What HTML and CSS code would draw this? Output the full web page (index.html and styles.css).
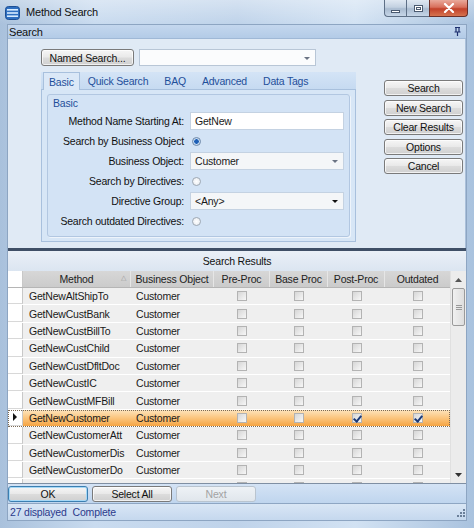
FILE: index.html
```html
<!DOCTYPE html>
<html>
<head>
<meta charset="utf-8">
<link rel="stylesheet" href="styles.css">
</head>
<body>
<div class="window">
  <div class="titlebar">
    <svg class="app-icon" width="15" height="14" viewBox="0 0 15 14">
      <rect x="0.5" y="0.5" width="14" height="13" rx="3" fill="#2f6fc0" stroke="#1d4f94"/>
      <rect x="2" y="3" width="11" height="1.6" fill="#d8ecff"/>
      <rect x="2" y="6.2" width="11" height="1.6" fill="#d8ecff"/>
      <rect x="2" y="9.4" width="11" height="1.6" fill="#d8ecff"/>
    </svg>
    <span class="title">Method Search</span>
    <div class="controls">
      <div class="ctl ctl-min"><span class="min-bar"></span></div>
      <div class="ctl ctl-max"><span class="max-box"></span></div>
      <div class="ctl ctl-close">
        <svg width="12" height="10" viewBox="0 0 12 10"><path d="M2 1 L10 9 M10 1 L2 9" stroke="#fff" stroke-width="2.2" stroke-linecap="round"/></svg>
      </div>
    </div>
  </div>

  <div class="client">
    <div class="search-head">
      <span>Search</span>
      <svg class="pin" width="7" height="9" viewBox="0 0 7 9"><path d="M1 0.5 H6 M2 0.5 V5 M5 0.5 V5 M0.5 5 H6.5 M3.5 5 V9" stroke="#1c2f6e" stroke-width="1.2" fill="none"/></svg>
    </div>

    <div class="panel">
      <div class="left">
        <div class="named-row">
          <button class="btn named-btn">Named Search...</button>
          <div class="combo named-combo"><span class="arrow"></span></div>
        </div>
        <div class="tabs">
          <div class="tab active">Basic</div>
          <div class="tab">Quick Search</div>
          <div class="tab">BAQ</div>
          <div class="tab">Advanced</div>
          <div class="tab">Data Tags</div>
        </div>
        <div class="tab-page">
          <div class="group">
            <div class="group-title">Basic</div>
            <div class="form">
              <div class="frow"><span class="lbl">Method Name Starting At:</span><div class="text">GetNew</div></div>
              <div class="frow"><span class="lbl">Search by Business Object</span><span class="radio on"></span></div>
              <div class="frow"><span class="lbl">Business Object:</span><div class="combo field">Customer<span class="arrow"></span></div></div>
              <div class="frow"><span class="lbl">Search by Directives:</span><span class="radio"></span></div>
              <div class="frow"><span class="lbl">Directive Group:</span><div class="combo field">&lt;Any&gt;<span class="arrow dark"></span></div></div>
              <div class="frow"><span class="lbl">Search outdated Directives:</span><span class="radio"></span></div>
            </div>
          </div>
        </div>
      </div>
      <div class="actions">
        <button class="btn act">Search</button>
        <button class="btn act">New Search</button>
        <button class="btn act">Clear Results</button>
        <button class="btn act">Options</button>
        <button class="btn act">Cancel</button>
      </div>
    </div>

    <div class="splitter"></div>
    <div class="results-head">Search Results</div>

    <div class="grid">
      <div class="grid-main">
        <div class="ghead">
          <div class="c sel"></div>
          <div class="c m">Method<span class="sort">&#9651;</span></div>
          <div class="c b">Business Object</div>
          <div class="c p">Pre-Proc</div>
          <div class="c q">Base Proc</div>
          <div class="c r">Post-Proc</div>
          <div class="c o">Outdated</div>
        </div>
        <div class="gbody">
          <div class="grow"><div class="c sel"></div><div class="c m">GetNewAltShipTo</div><div class="c b">Customer</div><div class="c p"><i class="cb"></i></div><div class="c q"><i class="cb"></i></div><div class="c r"><i class="cb"></i></div><div class="c o"><i class="cb"></i></div></div>
          <div class="grow"><div class="c sel"></div><div class="c m">GetNewCustBank</div><div class="c b">Customer</div><div class="c p"><i class="cb"></i></div><div class="c q"><i class="cb"></i></div><div class="c r"><i class="cb"></i></div><div class="c o"><i class="cb"></i></div></div>
          <div class="grow"><div class="c sel"></div><div class="c m">GetNewCustBillTo</div><div class="c b">Customer</div><div class="c p"><i class="cb"></i></div><div class="c q"><i class="cb"></i></div><div class="c r"><i class="cb"></i></div><div class="c o"><i class="cb"></i></div></div>
          <div class="grow"><div class="c sel"></div><div class="c m">GetNewCustChild</div><div class="c b">Customer</div><div class="c p"><i class="cb"></i></div><div class="c q"><i class="cb"></i></div><div class="c r"><i class="cb"></i></div><div class="c o"><i class="cb"></i></div></div>
          <div class="grow"><div class="c sel"></div><div class="c m">GetNewCustDfltDoc</div><div class="c b">Customer</div><div class="c p"><i class="cb"></i></div><div class="c q"><i class="cb"></i></div><div class="c r"><i class="cb"></i></div><div class="c o"><i class="cb"></i></div></div>
          <div class="grow"><div class="c sel"></div><div class="c m">GetNewCustIC</div><div class="c b">Customer</div><div class="c p"><i class="cb"></i></div><div class="c q"><i class="cb"></i></div><div class="c r"><i class="cb"></i></div><div class="c o"><i class="cb"></i></div></div>
          <div class="grow"><div class="c sel"></div><div class="c m">GetNewCustMFBill</div><div class="c b">Customer</div><div class="c p"><i class="cb"></i></div><div class="c q"><i class="cb"></i></div><div class="c r"><i class="cb"></i></div><div class="c o"><i class="cb"></i></div></div>
          <div class="grow selected"><div class="c sel"><span class="tri"></span></div><div class="c m">GetNewCustomer</div><div class="c b">Customer</div><div class="c p"><i class="cb"></i></div><div class="c q"><i class="cb"></i></div><div class="c r"><i class="cb on"></i></div><div class="c o"><i class="cb on"></i></div></div>
          <div class="grow"><div class="c sel"></div><div class="c m">GetNewCustomerAtt</div><div class="c b">Customer</div><div class="c p"><i class="cb"></i></div><div class="c q"><i class="cb"></i></div><div class="c r"><i class="cb"></i></div><div class="c o"><i class="cb"></i></div></div>
          <div class="grow"><div class="c sel"></div><div class="c m">GetNewCustomerDis</div><div class="c b">Customer</div><div class="c p"><i class="cb"></i></div><div class="c q"><i class="cb"></i></div><div class="c r"><i class="cb"></i></div><div class="c o"><i class="cb"></i></div></div>
          <div class="grow"><div class="c sel"></div><div class="c m">GetNewCustomerDo</div><div class="c b">Customer</div><div class="c p"><i class="cb"></i></div><div class="c q"><i class="cb"></i></div><div class="c r"><i class="cb"></i></div><div class="c o"><i class="cb"></i></div></div>
          <div class="grow"><div class="c sel"></div><div class="c m"></div><div class="c b"></div><div class="c p"><i class="cb"></i></div><div class="c q"><i class="cb"></i></div><div class="c r"><i class="cb"></i></div><div class="c o"><i class="cb"></i></div></div>
        </div>
      </div>
      <div class="vscroll">
        <div class="sarrow"><svg width="7" height="4" viewBox="0 0 7 4"><path d="M0 4 L3.5 0 L7 4Z" fill="#555"/></svg></div>
        <div class="track">
          <div class="thumb"><span class="grip"></span></div>
        </div>
        <div class="sarrow"><svg width="7" height="4" viewBox="0 0 7 4"><path d="M0 0 L3.5 4 L7 0Z" fill="#333"/></svg></div>
      </div>
    </div>

    <div class="bottom-bar">
      <button class="btn bb focus">OK</button>
      <button class="btn bb">Select All</button>
      <button class="btn bb disabled">Next</button>
    </div>
    <div class="status">
      <span>27 displayed</span><span>Complete</span>
      <svg class="sgrip" width="10" height="10" viewBox="0 0 10 10">
        <g fill="#6a7f99"><rect x="8" y="0" width="2" height="2"/><rect x="5" y="3" width="2" height="2"/><rect x="8" y="3" width="2" height="2"/><rect x="2" y="6" width="2" height="2"/><rect x="5" y="6" width="2" height="2"/><rect x="8" y="6" width="2" height="2"/></g>
      </svg>
    </div>
  </div>
</div>
</body>
</html>
```
FILE: styles.css
```css
* { box-sizing: border-box; }
html, body { margin: 0; padding: 0; }
body {
  width: 474px; height: 528px; overflow: hidden;
  font-family: "Liberation Sans", Arial, sans-serif;
  font-size: 10.5px; letter-spacing: -0.2px; color: #1a1a1a;
  background: #9db4cf;
}
.window {
  width: 474px; height: 528px;
  display: flex; flex-direction: column;
  background: linear-gradient(90deg, #a9c1dc 0%, #c9dbef 20%, #bfd3ea 50%, #d2e2f3 75%, #a9c2de 100%);
}
.titlebar {
  height: 24px; flex: none;
  display: flex; align-items: center;
  padding-left: 5px;
  background: linear-gradient(180deg, rgba(255,255,255,0.35), rgba(255,255,255,0));
}
.app-icon { flex: none; margin-top: 1px; }
.title { margin-left: 6px; font-size: 11px; letter-spacing: -0.2px; color: #111; }
.controls { margin-left: auto; margin-right: 6px; align-self: flex-start; display: flex; height: 17px; }
.ctl {
  height: 17px; display: flex; align-items: center; justify-content: center;
  border: 1px solid #5d6f86; border-top: none;
  background: linear-gradient(180deg, #dfe8f2 0%, #c3d1e1 45%, #a9bbd0 55%, #c6d6e8 100%);
}
.ctl-min { width: 22px; border-radius: 0 0 0 4px; border-right: none; }
.ctl-max { width: 23px; border-right: none; }
.ctl-close {
  width: 39px; border-radius: 0 0 4px 0; border-color: #6b2f28;
  background: linear-gradient(180deg, #e9a99b 0%, #d8705c 45%, #c2412a 55%, #d6734f 100%);
}
.min-bar { width: 9px; height: 3px; background: #fff; border: 1px solid #4a5a70; margin-top: 6px; }
.max-box { width: 9px; height: 7px; border: 1px solid #4a5a70; background: #fff; box-shadow: inset 0 0 0 1px #fff, inset 0 0 0 2px #4a5a70; }

.client {
  flex: 1; margin: 0 7px 7px 7px;
  display: flex; flex-direction: column;
  background: #dfe9f5;
  border: 1px solid #8da5c2;
}
.search-head {
  height: 14px; flex: none;
  display: flex; align-items: center; justify-content: space-between;
  padding: 0 6px 0 1px;
  background: linear-gradient(180deg, #c4d7ee, #b3cbe7);
  border-bottom: 1px solid #9fb8d6;
  font-size: 11px; color: #111;
}
.pin { margin-right: -1px; }

.panel {
  height: 209px; flex: none;
  display: flex;
  padding: 10px 0 0 33px;
  background: #e0eaf5;
  border-right: 1px solid #aac0da;
}
.left { width: 315px; display: flex; flex-direction: column; }
.named-row { display: flex; height: 17px; align-items: stretch; }
.btn {
  font-family: "Liberation Sans", Arial, sans-serif; font-size: 10.5px; letter-spacing: -0.2px; color: #111;
  border: 1px solid #7a7a7a; border-radius: 3px;
  background: linear-gradient(180deg, #f6f6f6 0%, #e9e9e9 48%, #dcdcdc 52%, #d0d0d0 100%);
  padding: 0; margin: 0; line-height: 12px;
  box-shadow: inset 0 0 0 1px rgba(255,255,255,0.7);
  white-space: nowrap; overflow: visible;
}
.named-btn { width: 93px; }
.combo {
  position: relative;
  background: #fff; border: 1px solid #b8c6d6;
  display: flex; align-items: center; padding-left: 4px;
}
.named-combo { width: 177px; margin-left: 5px; background: #fbfcfd; }
.arrow {
  position: absolute; right: 5px; top: 50%; margin-top: -1px;
  width: 0; height: 0;
  border-left: 3px solid transparent; border-right: 3px solid transparent;
  border-top: 3px solid #6a7383;
}
.arrow.dark { border-top-color: #111; }

.tabs {
  margin-top: 6px; height: 18px; flex: none;
  display: flex; align-items: stretch;
  background: linear-gradient(180deg, #d4e4f6, #c6daf1);
  border-bottom: 1px solid #a8c0dd;
}
.tab {
  display: flex; align-items: center;
  padding: 0 8px; color: #1f4f9a;
}
.tab.active {
  margin-left: 2px; padding: 0 5px;
  background: #dbe8f7;
  border: 1px solid #a8c0dd; border-bottom: none;
  margin-bottom: -1px;
}
.tab-page {
  height: 152px;
  background: #d7e6f6;
  border: 1px solid #a8c0dd; border-top: none;
  padding: 4px 5px 4px 5px;
}
.group {
  height: 100%;
  border: 1px solid #b2c7e1; border-radius: 3px;
  background: #d3e3f5;
  padding: 2px 5px 0 5px;
  box-shadow: 1px 1px 0 #eef4fb;
}
.group-title { color: #1f4f9a; height: 13px; line-height: 13px; }
.form { margin-top: 2px; display: flex; flex-direction: column; gap: 2px; }
.frow { display: flex; align-items: center; height: 18px; }
.lbl { width: 131px; text-align: right; white-space: nowrap; flex: none; color: #111; }
.text, .field {
  margin-left: 6px; width: 156px; height: 18px;
  background: #fff; border: 1px solid #c4d2e2;
  display: flex; align-items: center; padding-left: 4px;
}
.field { background: #f4f6f8; }
.radio {
  margin-left: 8px; width: 9px; height: 9px; border-radius: 50%;
  border: 1px solid #9ea8b3;
  background: radial-gradient(circle, #fff 0%, #e4e8ed 100%);
  flex: none;
}
.radio.on {
  background: radial-gradient(circle, #1e5fb5 0 2px, #b9d5f2 2.5px, #e8eef5 100%);
  border-color: #6d87a8;
}

.actions {
  margin-left: 28px; margin-top: 31px;
  width: 79px; display: flex; flex-direction: column; gap: 3.6px;
}
.act { height: 16px; width: 79px; }

.splitter { height: 3px; flex: none; background: #3f4f66; }
.results-head {
  height: 20px; flex: none;
  display: flex; align-items: center; justify-content: center;
  background: linear-gradient(180deg, #eaf0f7, #dbe5f1);
  color: #111;
}
.grid {
  height: 213px; flex: none;
  display: flex;
  background: #fff;
  border-bottom: 1px solid #7f8fa3;
  overflow: hidden;
}
.grid-main { flex: 1; overflow: hidden; }
.ghead {
  display: flex; height: 17px;
  background: linear-gradient(180deg, #d7d7d7, #cbcbcb);
  border-bottom: 1px solid #b5b5b5;
}
.ghead .c { display: flex; align-items: center; justify-content: center; color: #222; border-right: 1px solid #e6e6e6; }
.ghead .sel { background: #fff; border-right: 1px solid #c8c8c8; }
.ghead .m { position: relative; }
.sort { position: absolute; right: 4px; top: 3px; font-size: 7px; color: #9a9a9a; }
.c { flex: none; height: 100%; white-space: nowrap; overflow: hidden; }
.sel { width: 15px; }
.m { width: 108px; }
.b { width: 83px; }
.p { width: 56px; }
.q { width: 58px; }
.r { width: 57px; }
.o { width: 66px; }
.grow {
  display: flex; height: 17.4px;
  background: #efefef;
  border-bottom: 1px solid #fff;
}
.grow .c { display: flex; align-items: center; }
.grow .sel { background: #fff; border-right: 1px solid #c8c8c8; border-bottom: 1px solid #d8d8d8; justify-content: center; }
.grow .m { padding-left: 6px; }
.grow .b { padding-left: 5px; }
.grow .p, .grow .q, .grow .r, .grow .o { justify-content: center; }
.cb {
  display: block; width: 10px; height: 10px;
  border: 1px solid #b3b3b3;
  background: linear-gradient(135deg, #d6d6d6, #f7f7f7);
  position: relative;
}
.cb.on::after {
  content: ""; position: absolute; left: 2px; top: 0px;
  width: 3px; height: 6px;
  border-right: 2px solid #1c3a78; border-bottom: 2px solid #1c3a78;
  transform: rotate(40deg);
}
.grow.selected {
  background: linear-gradient(180deg, #fde4bd 0%, #fbc57d 50%, #f5a443 100%);
  outline: 1px dotted #7b6a55; outline-offset: -1px;
}
.grow.selected .sel { background: #fff; }
.tri {
  width: 0; height: 0;
  border-top: 4px solid transparent; border-bottom: 4px solid transparent;
  border-left: 4px solid #111;
}
.vscroll {
  width: 16px; flex: none;
  display: flex; flex-direction: column;
  background: #ececec;
  border-left: 1px solid #e0e0e0;
}
.sarrow { height: 17px; display: flex; align-items: center; justify-content: center; flex: none; }
.track { flex: 1; padding: 0 1px; }
.thumb {
  height: 38px; border: 1px solid #9a9a9a; border-radius: 2px;
  background: linear-gradient(90deg, #f0f0f0, #dedede);
  display: flex; align-items: center; justify-content: center;
}
.grip { width: 6px; height: 5px; border-top: 1px solid #999; border-bottom: 1px solid #999; position: relative; }
.grip::after { content: ""; position: absolute; left: 0; right: 0; top: 1px; height: 1px; background: #999; }

.bottom-bar {
  height: 20px; flex: none;
  display: flex; align-items: center; gap: 4px;
  background: linear-gradient(180deg, #d4e3f5, #bfd5ee);
  border-bottom: 1px solid #8ea6c3;
}
.bb { width: 80px; height: 16px; }
.bb.focus { border-color: #3c7fb1; box-shadow: inset 0 0 0 1px #a6d8f6; }
.bb.disabled { color: #a3a3a3; border-color: #b9c4cf; background: linear-gradient(180deg, #eef2f6, #e0e6ec); box-shadow: none; }
.status {
  flex: 1; display: flex; align-items: center; gap: 6px;
  padding-left: 2px; position: relative;
  background: linear-gradient(180deg, #d9e6f5, #c5d8ee);
  color: #2b3a8c;
}
.sgrip { position: absolute; right: 1px; bottom: 1px; }
```
